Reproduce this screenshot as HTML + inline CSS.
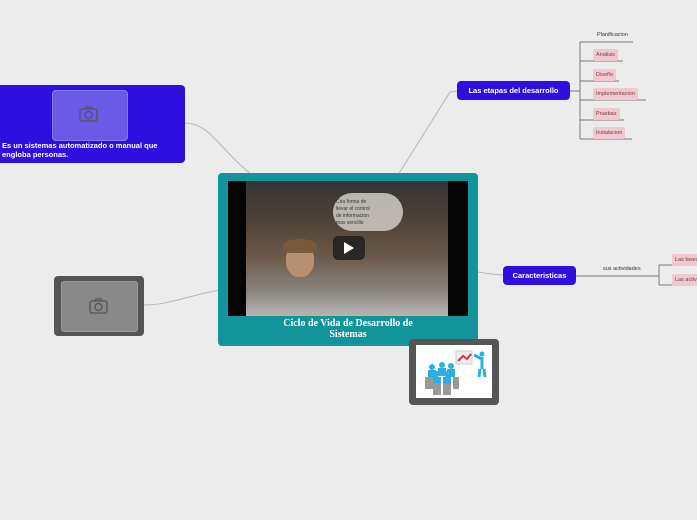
<!DOCTYPE html>
<html><head><meta charset="utf-8"><style>
body{margin:0;width:697px;height:520px;background:#ececec;position:relative;overflow:hidden;font-family:"Liberation Sans",sans-serif}
.a{position:absolute}
.blue{background:#2e0fe0;color:#fff;font-weight:bold;border-radius:4px}
.pink{position:absolute;background:#f0c8cf;color:#7a3a44;font-size:5.5px;border-radius:2px;padding:0 3px;height:12px;line-height:12px;left:593px;white-space:nowrap;overflow:hidden}
</style></head><body>
<svg class="a" style="left:0;top:0" width="697" height="520">
<g fill="none" stroke="#b8b8b8" stroke-width="1">
<path d="M185 123 C210 123 220 150 252 175"/>
<path d="M144 305 C170 305 190 295 220 290"/>
<path d="M398 175 L450 92 L458 91"/>
<path d="M478 272 C490 274 495 275 504 275"/>
<path d="M410 346 L420 372"/>
</g>
<g fill="none" stroke="#777" stroke-width="1">
<path d="M570 91 L580 91"/>
<path d="M580 42 L580 139"/>
<path d="M580 42 L633 42 M580 61 L623 61 M580 81 L619 81 M580 100 L646 100 M580 120 L624 120 M580 139 L632 139"/>
<path d="M576 276 L659 276 M659 265 L659 285 M659 265 L697 265 M659 285 L697 285"/>
</g>
</svg>
<div class="a blue" style="left:-5px;top:85px;width:190px;height:78px">
<div class="a" style="left:57px;top:5px;width:74px;height:49px;background:#6b5ae6;border:1px solid #8a7cf0;border-radius:4px"></div>
<svg class="a" style="left:84px;top:20px" width="20" height="18"><rect x="1" y="4" width="17" height="12" rx="2" fill="none" stroke="#555" stroke-width="1.3"/><circle cx="9.5" cy="10" r="3.5" fill="none" stroke="#555" stroke-width="1.3"/><path d="M6 4 L7 2 L12 2 L13 4" fill="none" stroke="#555" stroke-width="1.3"/></svg>
<div class="a" style="left:7px;top:57px;font-size:7.5px;line-height:8.5px;white-space:nowrap">Es un sistemas automatizado o manual que<br>engloba personas.</div>
</div>
<div class="a" style="left:54px;top:276px;width:90px;height:60px;background:#555;border-radius:4px">
<div class="a" style="left:7px;top:5px;width:75px;height:49px;background:#888;border:1px solid #999;border-radius:3px"></div>
<svg class="a" style="left:35px;top:21px" width="20" height="18"><rect x="1" y="4" width="17" height="12" rx="2" fill="none" stroke="#555" stroke-width="1.3"/><circle cx="9.5" cy="10" r="3.5" fill="none" stroke="#555" stroke-width="1.3"/><path d="M6 4 L7 2 L12 2 L13 4" fill="none" stroke="#555" stroke-width="1.3"/></svg>
</div>
<div class="a" style="left:218px;top:173px;width:260px;height:173px;background:#13939a;border-radius:4px">
<div class="a" style="left:10px;top:8px;width:240px;height:135px;background:#050505;overflow:hidden">
<div class="a" style="left:18px;top:0;width:202px;height:135px;background:linear-gradient(180deg,#333 0%,#4f4338 30%,#6a5848 55%,#8a8580 82%,#b8b5b0 100%)"></div>
<div class="a" style="left:105px;top:12px;width:70px;height:38px;background:#d8d4cf;border-radius:20px;opacity:.8"></div>
<div class="a" style="left:108px;top:18px;font-size:5px;color:#333;line-height:7px">Cria forma de<br>llevar el control<br>de informacion<br>mas sencillo</div>
<div class="a" style="left:58px;top:62px;width:28px;height:34px;background:#b89070;border-radius:45%"></div>
<div class="a" style="left:55px;top:58px;width:34px;height:14px;background:#7a5a3a;border-radius:50% 50% 20% 20%"></div>
<div class="a" style="left:105px;top:55px;width:32px;height:24px;background:rgba(30,30,30,.85);border-radius:5px"></div>
<svg class="a" style="left:115px;top:61px" width="12" height="12"><path d="M1 0 L11 6 L1 12Z" fill="#fff"/></svg>
</div>
<div class="a" style="left:0;top:145px;width:260px;text-align:center;color:#fff;font-family:'Liberation Serif',serif;font-weight:bold;font-size:10px;line-height:11px">Ciclo de Vida de Desarrollo de<br>Sistemas</div>
</div>
<div class="a" style="left:409px;top:339px;width:90px;height:66px;background:#555;border-radius:4px">
<div class="a" style="left:7px;top:6px;width:76px;height:53px;background:#fff"></div>
<svg class="a" style="left:10px;top:8px" width="72" height="50">
<rect x="37" y="4" width="16" height="13" fill="#eee" stroke="#ccc"/><path d="M39 14 L44 9 L48 12 L52 7" stroke="#d33" stroke-width="2" fill="none"/>
<circle cx="63" cy="7" r="2.5" fill="#2ab0e0"/><path d="M63 10 L63 22 M63 12 L55 8 M61 22 L60 30 M65 22 L66 30" stroke="#2ab0e0" stroke-width="3"/>
<g fill="#2ab0e0"><circle cx="13" cy="20" r="3"/><circle cx="23" cy="18" r="3"/><circle cx="32" cy="19" r="3"/><circle cx="18" cy="27" r="3"/><circle cx="28" cy="27" r="3"/><rect x="9" y="23" width="8" height="8"/><rect x="19" y="21" width="8" height="8"/><rect x="28" y="22" width="8" height="8"/><rect x="14" y="30" width="8" height="8"/><rect x="24" y="30" width="8" height="8"/></g>
<g fill="#999"><rect x="6" y="30" width="8" height="12"/><rect x="14" y="36" width="8" height="12"/><rect x="24" y="37" width="8" height="11"/><rect x="34" y="30" width="6" height="12"/></g>
</svg>
</div>
<div class="a blue" style="left:457px;top:81px;width:113px;height:19px;font-size:7.5px;line-height:19px;text-align:center">Las etapas del desarrollo</div>
<div class="a blue" style="left:503px;top:266px;width:73px;height:19px;font-size:7.5px;line-height:19px;text-align:center">Caracteristicas</div>
<div class="a" style="left:597px;top:32px;font-size:5.5px;color:#333">Planificacion</div>
<div class="pink" style="top:49px">Analisis</div>
<div class="pink" style="top:69px">Diseño</div>
<div class="pink" style="top:88px">Implementacion</div>
<div class="pink" style="top:108px">Pruebas</div>
<div class="pink" style="top:127px">Instalacion</div>
<div class="a" style="left:603px;top:266px;font-size:5.5px;color:#333">sus actividades</div>
<div class="pink" style="left:672px;top:254px;width:30px">Las fases</div>
<div class="pink" style="left:672px;top:274px;width:30px">Las actividades</div>
</body></html>
